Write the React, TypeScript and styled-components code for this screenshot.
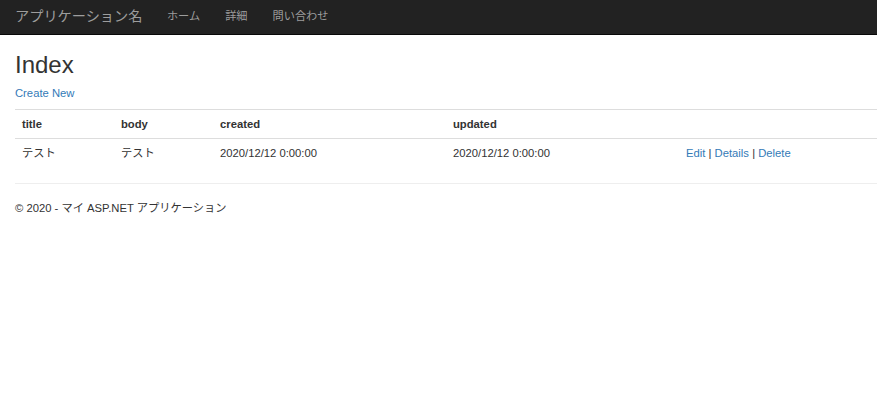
import React from "react";
import styled, { createGlobalStyle } from "styled-components";

const Global = createGlobalStyle`
  html, body { margin: 0; padding: 0; background: #fff; overflow: hidden; }
  body {
    font-family: "Liberation Sans", Arial, "Noto Sans CJK JP", sans-serif;
    font-size: 11.25px;
    line-height: 15px;
    color: #333;
  }
  * { box-sizing: border-box; }
`;

const NavBar = styled.nav`
  height: 35px;
  background: #222;
  border-bottom: 1px solid #080808;
  display: flex;
  align-items: center;
  padding: 0 15px 2px;
`;

const Brand = styled.a`
  color: #9d9d9d;
  font-size: 14.2px;
  text-decoration: none;
  margin-right: 12px;
  font-family: "Liberation Sans", "Noto Sans CJK JP", sans-serif;
`;

const NavLink = styled.a`
  color: #9d9d9d;
  font-size: 11.2px;
  text-decoration: none;
  padding: 0 12.5px;
  font-family: "Liberation Sans", "Noto Sans CJK JP", sans-serif;
`;

const Main = styled.main`
  padding: 0 0 0 15px;
`;

const Title = styled.h2`
  font-size: 24px;
  font-weight: 500;
  line-height: 26px;
  margin: 17px 0 8px;
`;

const Para = styled.p`
  margin: 0 0 8px;
`;

const Link = styled.a`
  color: #337ab7;
  text-decoration: none;
`;

const Table = styled.table`
  width: 100%;
  border-collapse: collapse;
  margin-bottom: 14px;
`;

const Th = styled.th<{ $w?: number }>`
  text-align: left;
  font-weight: bold;
  padding: 7px 7px 6px;
  border-top: 1px solid #ddd;
  border-bottom: 1px solid #ddd;
  vertical-align: bottom;
  ${(p) => (p.$w ? `width: ${p.$w}px;` : "")}
`;

const Td = styled.td`
  padding: 7px 7px;
  line-height: 15px;
  vertical-align: top;
`;

const Row = styled.tr`
  height: 30px;
`;

const Sep = styled.span`
  color: #333;
`;

const Hr = styled.hr`
  border: 0;
  border-top: 1px solid #eee;
  margin: 0 0 15px;
`;

const Footer = styled.footer`
  padding-top: 2px;
`;

const Copy = styled.p`
  margin: 0;
`;

export default function App() {
  return (
    <>
      <Global />
      <NavBar>
        <Brand href="#">アプリケーション名</Brand>
        <NavLink href="#">ホーム</NavLink>
        <NavLink href="#">詳細</NavLink>
        <NavLink href="#">問い合わせ</NavLink>
      </NavBar>
      <Main>
        <Title>Index</Title>
        <Para>
          <Link href="#">Create New</Link>
        </Para>
        <Table>
          <thead>
            <tr>
              <Th $w={99}>title</Th>
              <Th $w={99}>body</Th>
              <Th $w={233}>created</Th>
              <Th $w={233}>updated</Th>
              <Th></Th>
            </tr>
          </thead>
          <tbody>
            <Row>
              <Td>テスト</Td>
              <Td>テスト</Td>
              <Td>2020/12/12 0:00:00</Td>
              <Td>2020/12/12 0:00:00</Td>
              <Td>
                <Link href="#">Edit</Link> <Sep>|</Sep> <Link href="#">Details</Link>{" "}
                <Sep>|</Sep> <Link href="#">Delete</Link>
              </Td>
            </Row>
          </tbody>
        </Table>
        <Hr />
        <Footer>
          <Copy>© 2020 - マイ ASP.NET アプリケーション</Copy>
        </Footer>
      </Main>
    </>
  );
}
